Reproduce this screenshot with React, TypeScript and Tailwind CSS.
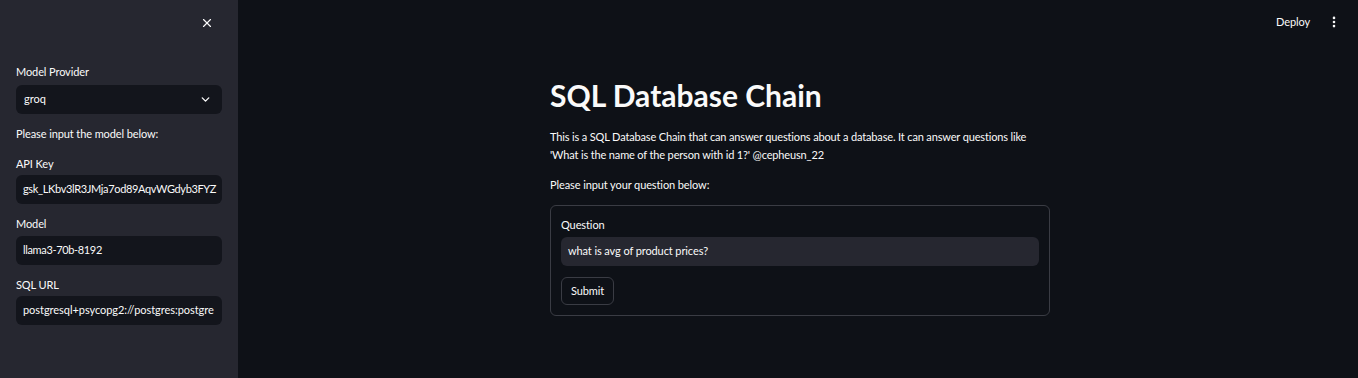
import { ChevronDown, X, EllipsisVertical } from 'lucide-react';

const font = { fontFamily: 'Lato, "Noto Sans", sans-serif' };

const Field = ({ label, value, tight = false }: { label: string; value: string; tight?: boolean }) => (
  <div className="flex flex-col">
    <label className="text-[11px] tracking-[-0.1px] leading-[16px] text-[#fafafa]">{label}</label>
    <div className="mt-[3.5px] h-[29px] rounded-[6px] bg-[#13151c] px-[7px] flex items-center overflow-hidden">
      <span
        className={`text-[11px] text-[#fafafa] whitespace-nowrap ${tight ? 'tracking-[-0.35px]' : 'tracking-[-0.05px]'}`}
      >
        {value}
      </span>
    </div>
  </div>
);

export default function App() {
  return (
    <div className="flex h-[378px] w-full bg-[#0e1117] text-[#fafafa]" style={font}>
      <aside className="w-[238px] shrink-0 bg-[#262730] px-[16px] flex flex-col">
        <div className="flex justify-end pt-[16px] pr-[8px]">
          <X className="w-[14px] h-[14px] text-[#fafafa]" strokeWidth={2} />
        </div>
        <div className="mt-[34px] flex flex-col">
          <label className="text-[11px] tracking-[-0.1px] leading-[16px]">Model Provider</label>
          <div className="mt-[4.5px] h-[29px] rounded-[6px] bg-[#13151c] pl-[8px] pr-[10px] flex items-center justify-between">
            <span className="text-[11px]">groq</span>
            <ChevronDown className="w-[13px] h-[13px]" strokeWidth={2.5} />
          </div>
        </div>
        <p className="mt-[12px] text-[11px] tracking-[-0.1px] leading-[16px]">Please input the model below:</p>
        <div className="mt-[14px] flex flex-col gap-[12px]">
          <Field label="API Key" value="gsk_LKbv3lR3JMja7od89AqvWGdyb3FYZ" tight />
          <Field label="Model" value="llama3-70b-8192" tight />
          <Field label="SQL URL" value="postgresql+psycopg2://postgres:postgre" />
        </div>
      </aside>
      <main className="flex-1 flex flex-col pl-[4px]">
        <div className="flex justify-end items-center h-[44px] pr-[17px] gap-[17px]">
          <span className="text-[11px] tracking-[-0.1px]">Deploy</span>
          <EllipsisVertical className="w-[14px] h-[14px]" strokeWidth={2.5} />
        </div>
        <div className="w-[500px] mx-auto mt-[33px]">
          <h1 className="text-[30px] leading-[36px] font-bold">SQL Database Chain</h1>
          <p className="mt-[15px] text-[11px] tracking-[-0.15px] leading-[18px]">
            This is a SQL Database Chain that can answer questions about a database. It can answer questions like
            'What is the name of the person with id 1?' @cepheusn_22
          </p>
          <p className="mt-[12px] text-[11px] tracking-[-0.1px] leading-[18px]">Please input your question below:</p>
          <div className="mt-[11px] border border-[#3a3c44] rounded-[6px] px-[10px] pt-[11px] pb-[10px]">
            <label className="text-[11px] tracking-[-0.1px] leading-[16px] block">Question</label>
            <div className="mt-[4px] h-[29px] rounded-[6px] bg-[#262730] px-[7px] flex items-center">
              <span className="text-[11px] tracking-[-0.1px]">what is avg of product prices?</span>
            </div>
            <button className="mt-[11px] h-[28px] px-[9px] rounded-[6px] border border-[#3a3c44] bg-[#0e1117] text-[11px] tracking-[-0.1px]">
              Submit
            </button>
          </div>
        </div>
      </main>
    </div>
  );
}
